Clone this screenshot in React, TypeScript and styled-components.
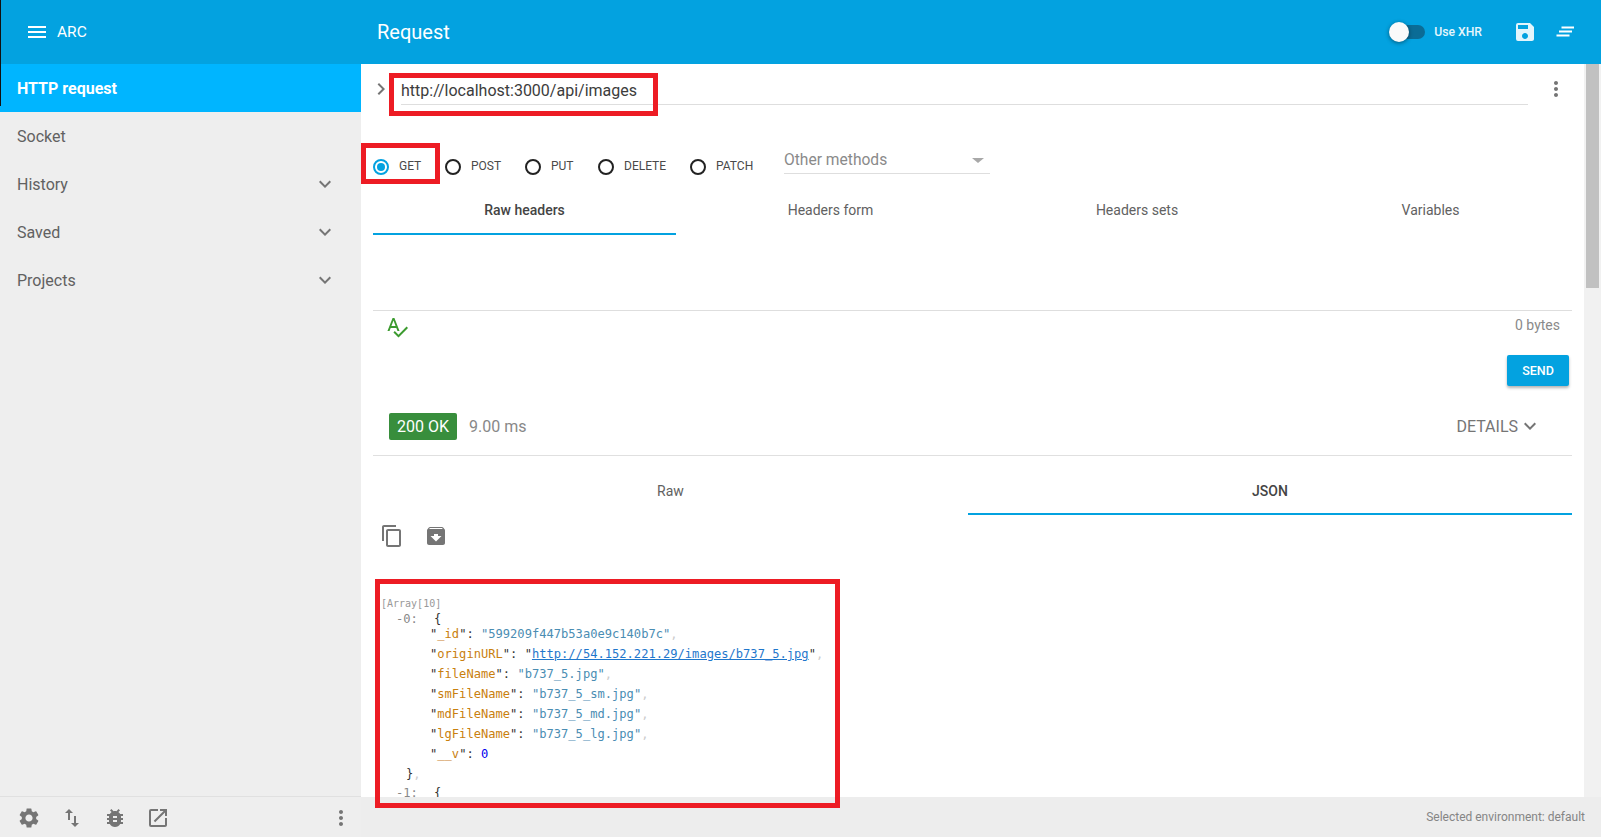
import React from "react";
import styled, { createGlobalStyle } from "styled-components";
import {
  MdMenu, MdSave, MdKeyboardArrowRight, MdMoreVert, MdSpellcheck, MdContentCopy,
  MdArchive, MdSettings, MdSwapVert, MdBugReport, MdOpenInNew, MdExpandMore, MdKeyboardArrowDown,
} from "react-icons/md";

const Global = createGlobalStyle`
  html, body { margin: 0; padding: 0; height: 100%; overflow: hidden; background: #fff; }
  body { font-family: Roboto, "Liberation Sans", sans-serif; color: #616161; }
  * { box-sizing: border-box; }
`;

const Page = styled.div`
  position: relative;
  display: grid;
  grid-template-columns: 361px 1fr;
  width: 1601px;
  height: 837px;
  overflow: hidden;
`;

const Sidebar = styled.aside`
  display: flex;
  flex-direction: column;
  background: #eeeeee;
  height: 837px;
`;

const SideHeader = styled.div`
  height: 64px;
  background: #03a2e0;
  display: flex;
  align-items: center;
  padding-left: 25px;
  color: #fff;
  font-size: 15.5px;
  font-weight: 400;
  gap: 8px;
  flex: none;
`;

const Nav = styled.nav`
  flex: 1;
  display: flex;
  flex-direction: column;
`;

const NavItem = styled.div<{ $active?: boolean }>`
  height: 48px;
  display: flex;
  align-items: center;
  justify-content: space-between;
  padding: 0 24px 0 17px;
  font-size: 16px;
  font-weight: ${(p) => (p.$active ? 700 : 400)};
  color: ${(p) => (p.$active ? "#fff" : "#616161")};
  background: ${(p) => (p.$active ? "#00b5ff" : "transparent")};
  svg { color: #757575; }
`;

const SideFooter = styled.div`
  height: 41px;
  flex: none;
  border-top: 1px solid #e0e0e0;
  display: flex;
  align-items: center;
  padding: 2px 8px 0 17px;
  color: #757575;
  gap: 19px;
`;

const FooterSpacer = styled.div`
  flex: 1;
`;

const Main = styled.main`
  display: flex;
  flex-direction: column;
  height: 837px;
  min-width: 0;
`;

const TopBar = styled.header`
  height: 64px;
  flex: none;
  background: #03a2e0;
  color: #fff;
  display: flex;
  align-items: center;
  padding-left: 16px;
`;

const Title = styled.h1`
  margin: 0;
  font-size: 20px;
  font-weight: 400;
  flex: 1;
`;

const Switch = styled.div`
  position: relative;
  width: 33px;
  height: 14px;
  border-radius: 7px;
  background: #0b6c96;
  margin-right: 9px;
`;

const Knob = styled.span`
  position: absolute;
  left: -3px;
  top: -3px;
  width: 20px;
  height: 20px;
  border-radius: 50%;
  background: #fafafa;
  box-shadow: 0 1px 4px rgba(0, 0, 0, 0.45);
`;

const SwitchLabel = styled.span`
  font-size: 12.2px;
  font-weight: 500;
  color: #e6f6fc;
  margin-right: 31px;
`;

const SortIcon = styled.svg`
  margin: 0 27px 0 19px;
`;

const Body = styled.div`
  flex: 1;
  display: flex;
  min-height: 0;
`;

const Content = styled.div`
  width: 1223px;
  background: #fff;
  padding: 0 12px;
  overflow: hidden;
`;

const Scrollbar = styled.div`
  flex: 1;
  background: #f1f1f1;
  padding: 0 2px;
`;

const Thumb = styled.div`
  height: 224px;
  background: #c1c1c1;
`;

const UrlRow = styled.div`
  height: 41px;
  display: flex;
  align-items: flex-end;
  color: #757575;
`;

const UrlChevron = styled.span`
  display: flex;
  width: 28px;
  height: 33px;
  align-items: center;
  margin-left: -4px;
  margin-right: 4px;
`;

const UrlInput = styled.div`
  width: 1127px;
  height: 33px;
  line-height: 38px;
  border-bottom: 1px solid #dedede;
  font-size: 16px;
  color: #3c3c3c;
`;

const UrlMenu = styled.span`
  display: flex;
  margin-left: 16px;
  height: 33px;
  align-items: center;
`;

const MethodRow = styled.div`
  height: 36px;
  margin-top: 43px;
  display: flex;
  align-items: center;
`;

const Radio = styled.label<{ $w: number }>`
  display: flex;
  align-items: center;
  width: ${(p) => p.$w}px;
  font-size: 12px;
  color: #4a4a4a;
`;

const RadioCircle = styled.span<{ $on?: boolean }>`
  position: relative;
  width: 16px;
  height: 16px;
  border-radius: 50%;
  border: 2px solid ${(p) => (p.$on ? "#03a2e0" : "#222")};
  margin-right: 10px;
  margin-top: 1px;
  &::after {
    content: "";
    display: ${(p) => (p.$on ? "block" : "none")};
    position: absolute;
    inset: 2px;
    border-radius: 50%;
    background: #03a2e0;
  }
`;

const OtherMethods = styled.div`
  width: 206px;
  height: 27px;
  margin: -11px 0 0 -1px;
  border-bottom: 1px solid #dedede;
  display: flex;
  align-items: center;
  justify-content: space-between;
  padding-right: 6px;
  font-size: 15.6px;
  color: #8a8a8a;
`;

const Caret = styled.span`
  width: 0;
  height: 0;
  border-left: 6px solid transparent;
  border-right: 6px solid transparent;
  border-top: 5px solid #a8a8a8;
`;

const Tabs = styled.div<{ $cols: string }>`
  display: grid;
  grid-template-columns: ${(p) => p.$cols};
`;

const Tab = styled.div<{ $active?: boolean; $h: number; $pad?: number }>`
  height: ${(p) => p.$h}px;
  padding-top: ${(p) => p.$pad ?? 0}px;
  display: flex;
  align-items: center;
  justify-content: center;
  font-size: 14px;
  font-weight: ${(p) => (p.$active ? 500 : 400)};
  color: ${(p) => (p.$active ? "#444" : "#616161")};
  border-bottom: 2px solid ${(p) => (p.$active ? "#03a2e0" : "transparent")};
`;

const Editor = styled.div`
  height: 76px;
  border-bottom: 1px solid #dedede;
`;

const EditorMeta = styled.div`
  height: 44px;
  display: flex;
  justify-content: space-between;
  padding: 6px 12px 0 12px;
  font-size: 14px;
  color: #8a8a8a;
`;

const SpellIcon = styled(MdSpellcheck)`
  color: #3c9b2f;
  margin-top: -2px;
`;

const Actions = styled.div`
  display: flex;
  justify-content: flex-end;
  height: 57px;
  padding-right: 3px;
`;

const SendButton = styled.button`
  width: 62px;
  height: 31px;
  border: none;
  border-radius: 2px;
  background: #03a2e0;
  color: #fff;
  font: 500 12.5px Roboto, sans-serif;
  box-shadow: 0 2px 3px rgba(0, 0, 0, 0.3);
`;

const StatusRow = styled.div`
  height: 43px;
  padding: 0 30px 0 16px;
  border-bottom: 1px solid #e0e0e0;
  display: flex;
  align-items: center;
  font-size: 16px;
  box-sizing: content-box;
`;

const Badge = styled.span`
  width: 68px;
  height: 27px;
  border-radius: 2px;
  background: #388e3c;
  color: #fff;
  display: flex;
  align-items: center;
  justify-content: center;
  margin: -15px 12px 0 0;
`;

const Timing = styled.span`
  color: #888;
  flex: 1;
  margin-top: -15px;
`;

const Details = styled.span`
  display: flex;
  align-items: center;
  color: #757575;
  margin-top: -15px;
`;

const ToolRow = styled.div`
  height: 82px;
  padding: 9px 7px 0 7px;
  display: flex;
  gap: 20px;
  align-items: flex-start;
  color: #757575;
`;

const Json = styled.div`
  font-family: "DejaVu Sans Mono", "Liberation Mono", monospace;
  font-size: 12.1px;
  color: #333;
  white-space: pre;
  margin-left: 8px;
`;

const ArrayLabel = styled.div`
  height: 15px;
  line-height: 14px;
  font-size: 10px;
  color: #999;
`;

const IndexLine = styled.div`
  height: 12px;
  line-height: 15px;
  padding-left: 15px;
  display: flex;
`;

const IndexName = styled.span`
  width: 38px;
  color: #888;
`;

const Field = styled.div`
  height: 20px;
  line-height: 20px;
  padding-left: 49px;
`;

const Closing = styled.div`
  height: 22px;
  line-height: 20px;
  padding-left: 25px;
`;

const Key = styled.span`
  color: #c9800e;
`;

const Str = styled.span`
  color: #4a8db3;
`;

const Num = styled.span`
  color: #0000ee;
`;

const Comma = styled.span`
  color: #ccc;
`;

const Link = styled.a`
  color: #1f77cc;
  text-decoration: underline;
`;

const EnvBar = styled.div`
  height: 40px;
  flex: none;
  background: #ededed;
  display: flex;
  align-items: center;
  justify-content: flex-end;
  padding-right: 16px;
  font-size: 12px;
  color: #858585;
`;

const Callout = styled.div<{ $x: number; $y: number; $w: number; $h: number }>`
  position: absolute;
  left: ${(p) => p.$x}px;
  top: ${(p) => p.$y}px;
  width: ${(p) => p.$w}px;
  height: ${(p) => p.$h}px;
  border: 5px solid #ed1c24;
  pointer-events: none;
`;

const EdgeLine = styled.div`
  position: absolute;
  left: 0;
  top: 0;
  width: 1px;
  height: 106px;
  background: #111;
`;

const fields: [string, string][] = [
  ["fileName", "b737_5.jpg"],
  ["smFileName", "b737_5_sm.jpg"],
  ["mdFileName", "b737_5_md.jpg"],
  ["lgFileName", "b737_5_lg.jpg"],
];

const methods: [string, number][] = [
  ["POST", 80],
  ["PUT", 73],
  ["DELETE", 92],
  ["PATCH", 95],
];

export default function App() {
  return (
    <Page>
      <Global />
      <Sidebar>
        <SideHeader>
          <MdMenu size={24} />
          <span>ARC</span>
        </SideHeader>
        <Nav>
          <NavItem $active>HTTP request</NavItem>
          <NavItem>Socket</NavItem>
          <NavItem>History<MdKeyboardArrowDown size={24} /></NavItem>
          <NavItem>Saved<MdKeyboardArrowDown size={24} /></NavItem>
          <NavItem>Projects<MdKeyboardArrowDown size={24} /></NavItem>
        </Nav>
        <SideFooter>
          <MdSettings size={24} />
          <MdSwapVert size={24} />
          <MdBugReport size={24} />
          <MdOpenInNew size={24} />
          <FooterSpacer />
          <MdMoreVert size={24} />
        </SideFooter>
      </Sidebar>
      <Main>
        <TopBar>
          <Title>Request</Title>
          <Switch><Knob /></Switch>
          <SwitchLabel>Use XHR</SwitchLabel>
          <MdSave size={24} color="#e3f5fc" />
          <SortIcon width="18" height="12" viewBox="0 0 18 12">
            <path d="M5.5 1.5H18M3 5.5H16M0.5 9.5H13.5" stroke="#fff" strokeWidth="1.8" fill="none" />
          </SortIcon>
        </TopBar>
        <Body>
          <Content>
            <UrlRow>
              <UrlChevron><MdKeyboardArrowRight size={24} /></UrlChevron>
              <UrlInput>http://localhost:3000/api/images</UrlInput>
              <UrlMenu><MdMoreVert size={24} /></UrlMenu>
            </UrlRow>
            <MethodRow>
              <Radio $w={72}><RadioCircle $on />GET</Radio>
              {methods.map(([m, w]) => (
                <Radio key={m} $w={w}><RadioCircle />{m}</Radio>
              ))}
              <OtherMethods>Other methods<Caret /></OtherMethods>
            </MethodRow>
            <Tabs $cols="303px 309px 304px 283px">
              <Tab $h={51} $pad={2} $active>Raw headers</Tab>
              <Tab $h={51} $pad={2}>Headers form</Tab>
              <Tab $h={51} $pad={2}>Headers sets</Tab>
              <Tab $h={51} $pad={2}>Variables</Tab>
            </Tabs>
            <Editor />
            <EditorMeta>
              <SpellIcon size={24} />
              <span>0 bytes</span>
            </EditorMeta>
            <Actions><SendButton>SEND</SendButton></Actions>
            <StatusRow>
              <Badge>200 OK</Badge>
              <Timing>9.00 ms</Timing>
              <Details>DETAILS<MdExpandMore size={24} /></Details>
            </StatusRow>
            <Tabs $cols="595px 604px">
              <Tab $h={59} $pad={13}>Raw</Tab>
              <Tab $h={59} $pad={13} $active>JSON</Tab>
            </Tabs>
            <ToolRow>
              <MdContentCopy size={24} />
              <MdArchive size={24} />
            </ToolRow>
            <Json>
              <ArrayLabel>[Array[10]</ArrayLabel>
              <IndexLine><IndexName>-0:</IndexName>{"{"}</IndexLine>
              <Field>"<Key>_id</Key>": <Str>"599209f447b53a0e9c140b7c"</Str><Comma>,</Comma></Field>
              <Field>"<Key>originURL</Key>": "<Link>http://54.152.221.29/images/b737_5.jpg</Link>"<Comma>,</Comma></Field>
              {fields.map(([k, v]) => (
                <Field key={k}>"<Key>{k}</Key>": <Str>"{v}"</Str><Comma>,</Comma></Field>
              ))}
              <Field>"<Key>__v</Key>": <Num>0</Num></Field>
              <Closing>{"}"}<Comma>,</Comma></Closing>
              <IndexLine><IndexName>-1:</IndexName>{"{"}</IndexLine>
            </Json>
          </Content>
          <Scrollbar><Thumb /></Scrollbar>
        </Body>
        <EnvBar>Selected environment: default</EnvBar>
      </Main>
      <EdgeLine />
      <Callout $x={389} $y={73} $w={269} $h={43} />
      <Callout $x={361} $y={143} $w={79} $h={41} />
      <Callout $x={375} $y={579} $w={465} $h={229} />
    </Page>
  );
}
